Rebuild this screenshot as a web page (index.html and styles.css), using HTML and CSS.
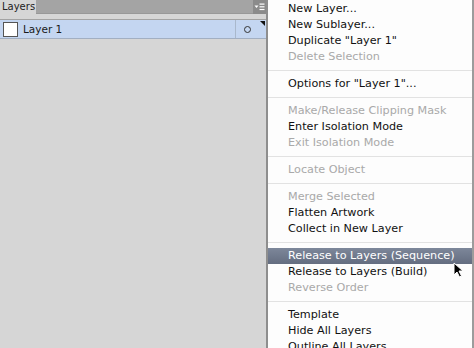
FILE: index.html
```html
<!DOCTYPE html>
<html lang="en">
<head>
    <meta charset="UTF-8">
    <title>Layers Panel Menu</title>
    <link rel="stylesheet" href="styles.css">
</head>
<body>

<div class="screen">

    <!-- Layers panel -->
    <div class="panel">
        <div class="panel-head">
            <div class="tab">Layers</div>
            <div class="head-fill"></div>
            <div class="panel-menu-btn">
                <svg width="13" height="14" viewBox="0 0 13 14">
                    <path d="M1.5 5.5 L5.5 5.5 L3.5 8 Z" fill="#fff"/>
                    <rect x="6.5" y="3.5" width="5" height="1.2" fill="#fff"/>
                    <rect x="6.5" y="6.2" width="5" height="1.2" fill="#fff"/>
                    <rect x="6.5" y="8.9" width="5" height="1.2" fill="#fff"/>
                </svg>
            </div>
        </div>

        <div class="layer-list">
            <div class="layer-row">
                <span class="swatch"></span>
                <span class="layer-name">Layer 1</span>
                <span class="target-col"><span class="target"></span></span>
                <span class="corner"></span>
            </div>
        </div>
    </div>

    <!-- Flyout menu -->
    <div class="menu">
        <ul class="menu-list">
            <li class="item">New Layer...</li>
            <li class="item">New Sublayer...</li>
            <li class="item">Duplicate "Layer 1"</li>
            <li class="item disabled">Delete Selection</li>
            <li class="sep"></li>
            <li class="item">Options for "Layer 1"...</li>
            <li class="sep"></li>
            <li class="item disabled">Make/Release Clipping Mask</li>
            <li class="item">Enter Isolation Mode</li>
            <li class="item disabled">Exit Isolation Mode</li>
            <li class="sep"></li>
            <li class="item disabled">Locate Object</li>
            <li class="sep"></li>
            <li class="item disabled">Merge Selected</li>
            <li class="item">Flatten Artwork</li>
            <li class="item">Collect in New Layer</li>
            <li class="sep"></li>
            <li class="item active">Release to Layers (Sequence)</li>
            <li class="item">Release to Layers (Build)</li>
            <li class="item disabled">Reverse Order</li>
            <li class="sep"></li>
            <li class="item">Template</li>
            <li class="item">Hide All Layers</li>
            <li class="item">Outline All Layers</li>
        </ul>

        <!-- mouse pointer over the highlighted item -->
        <svg class="cursor" width="12" height="16" viewBox="0 0 12 16">
            <path d="M1 1 L1 13 L4 10 L6.5 15 L8.5 14 L6 9 L10 9 Z" fill="#000" stroke="#fff" stroke-width="1"/>
        </svg>
    </div>

</div>

</body>
</html>
```

FILE: styles.css
```css
/* Basic Reset */
* {
    margin: 0;
    padding: 0;
    box-sizing: border-box;
}

body {
    width: 474px;
    height: 348px;
    overflow: hidden;
    background-color: #d6d6d6;
    font-family: 'DejaVu Sans', sans-serif;
}

.screen {
    display: flex;
    height: 348px;
}

/* Layers panel */
.panel {
    width: 268px;
    display: flex;
    flex-direction: column;
    background-color: #d6d6d6;
    border-right: 2px solid #8e8e8e;
}

.panel-head {
    display: flex;
    height: 14px;
}

.tab {
    width: 36px;
    padding-left: 2px;
    font-size: 10px;
    line-height: 14px;
    color: #222;
    background-color: #d6d6d6;
}

.head-fill {
    flex: 1;
    background-color: #a4a4a4;
    border-bottom: 1px solid #989898;
}

.panel-menu-btn {
    width: 13px;
    height: 14px;
    background-color: #8b8b8b;
}

.panel-menu-btn svg {
    display: block;
}

.layer-list {
    margin-top: 5px;
    border-top: 1px solid #a3a3a3;
}

.layer-row {
    position: relative;
    display: flex;
    align-items: center;
    height: 19px;
    background-color: #c4d6f1;
    border-bottom: 1px solid #a2afc2;
}

.swatch {
    width: 15px;
    height: 15px;
    margin-left: 3px;
    background-color: #fff;
    border: 1px solid #555;
}

.layer-name {
    flex: 1;
    margin-left: 5px;
    font-size: 10.5px;
    color: #1a1a1a;
}

.target-col {
    display: flex;
    align-items: center;
    justify-content: center;
    width: 31px;
    height: 100%;
    border-left: 1px solid #a9b8cc;
}

.target {
    width: 7px;
    height: 7px;
    margin-right: 8px;
    border: 1px solid #333;
    border-radius: 50%;
}

.corner {
    position: absolute;
    top: 1px;
    right: 1px;
    width: 0;
    height: 0;
    border-top: 5px solid #111;
    border-left: 5px solid transparent;
}

/* Flyout menu */
.menu {
    position: relative;
    flex: 1;
    background-color: #fdfdfd;
    border-right: 2px solid #9c9c9c;
    overflow: hidden;
}

.menu-list {
    list-style: none;
    padding-top: 1px;
}

.item {
    height: 16px;
    padding-left: 20px;
    font-size: 11.2px;
    line-height: 16px;
    color: #111;
    white-space: nowrap;
}

.item.disabled {
    color: #a9a9a9;
}

.item.active {
    color: #fff;
    background: linear-gradient(#7d879a, #646d80);
}

.sep {
    height: 1px;
    margin: 5px 0;
    background-color: #e2e2e2;
}

.cursor {
    position: absolute;
    left: 185px;
    top: 262px;
}
```
